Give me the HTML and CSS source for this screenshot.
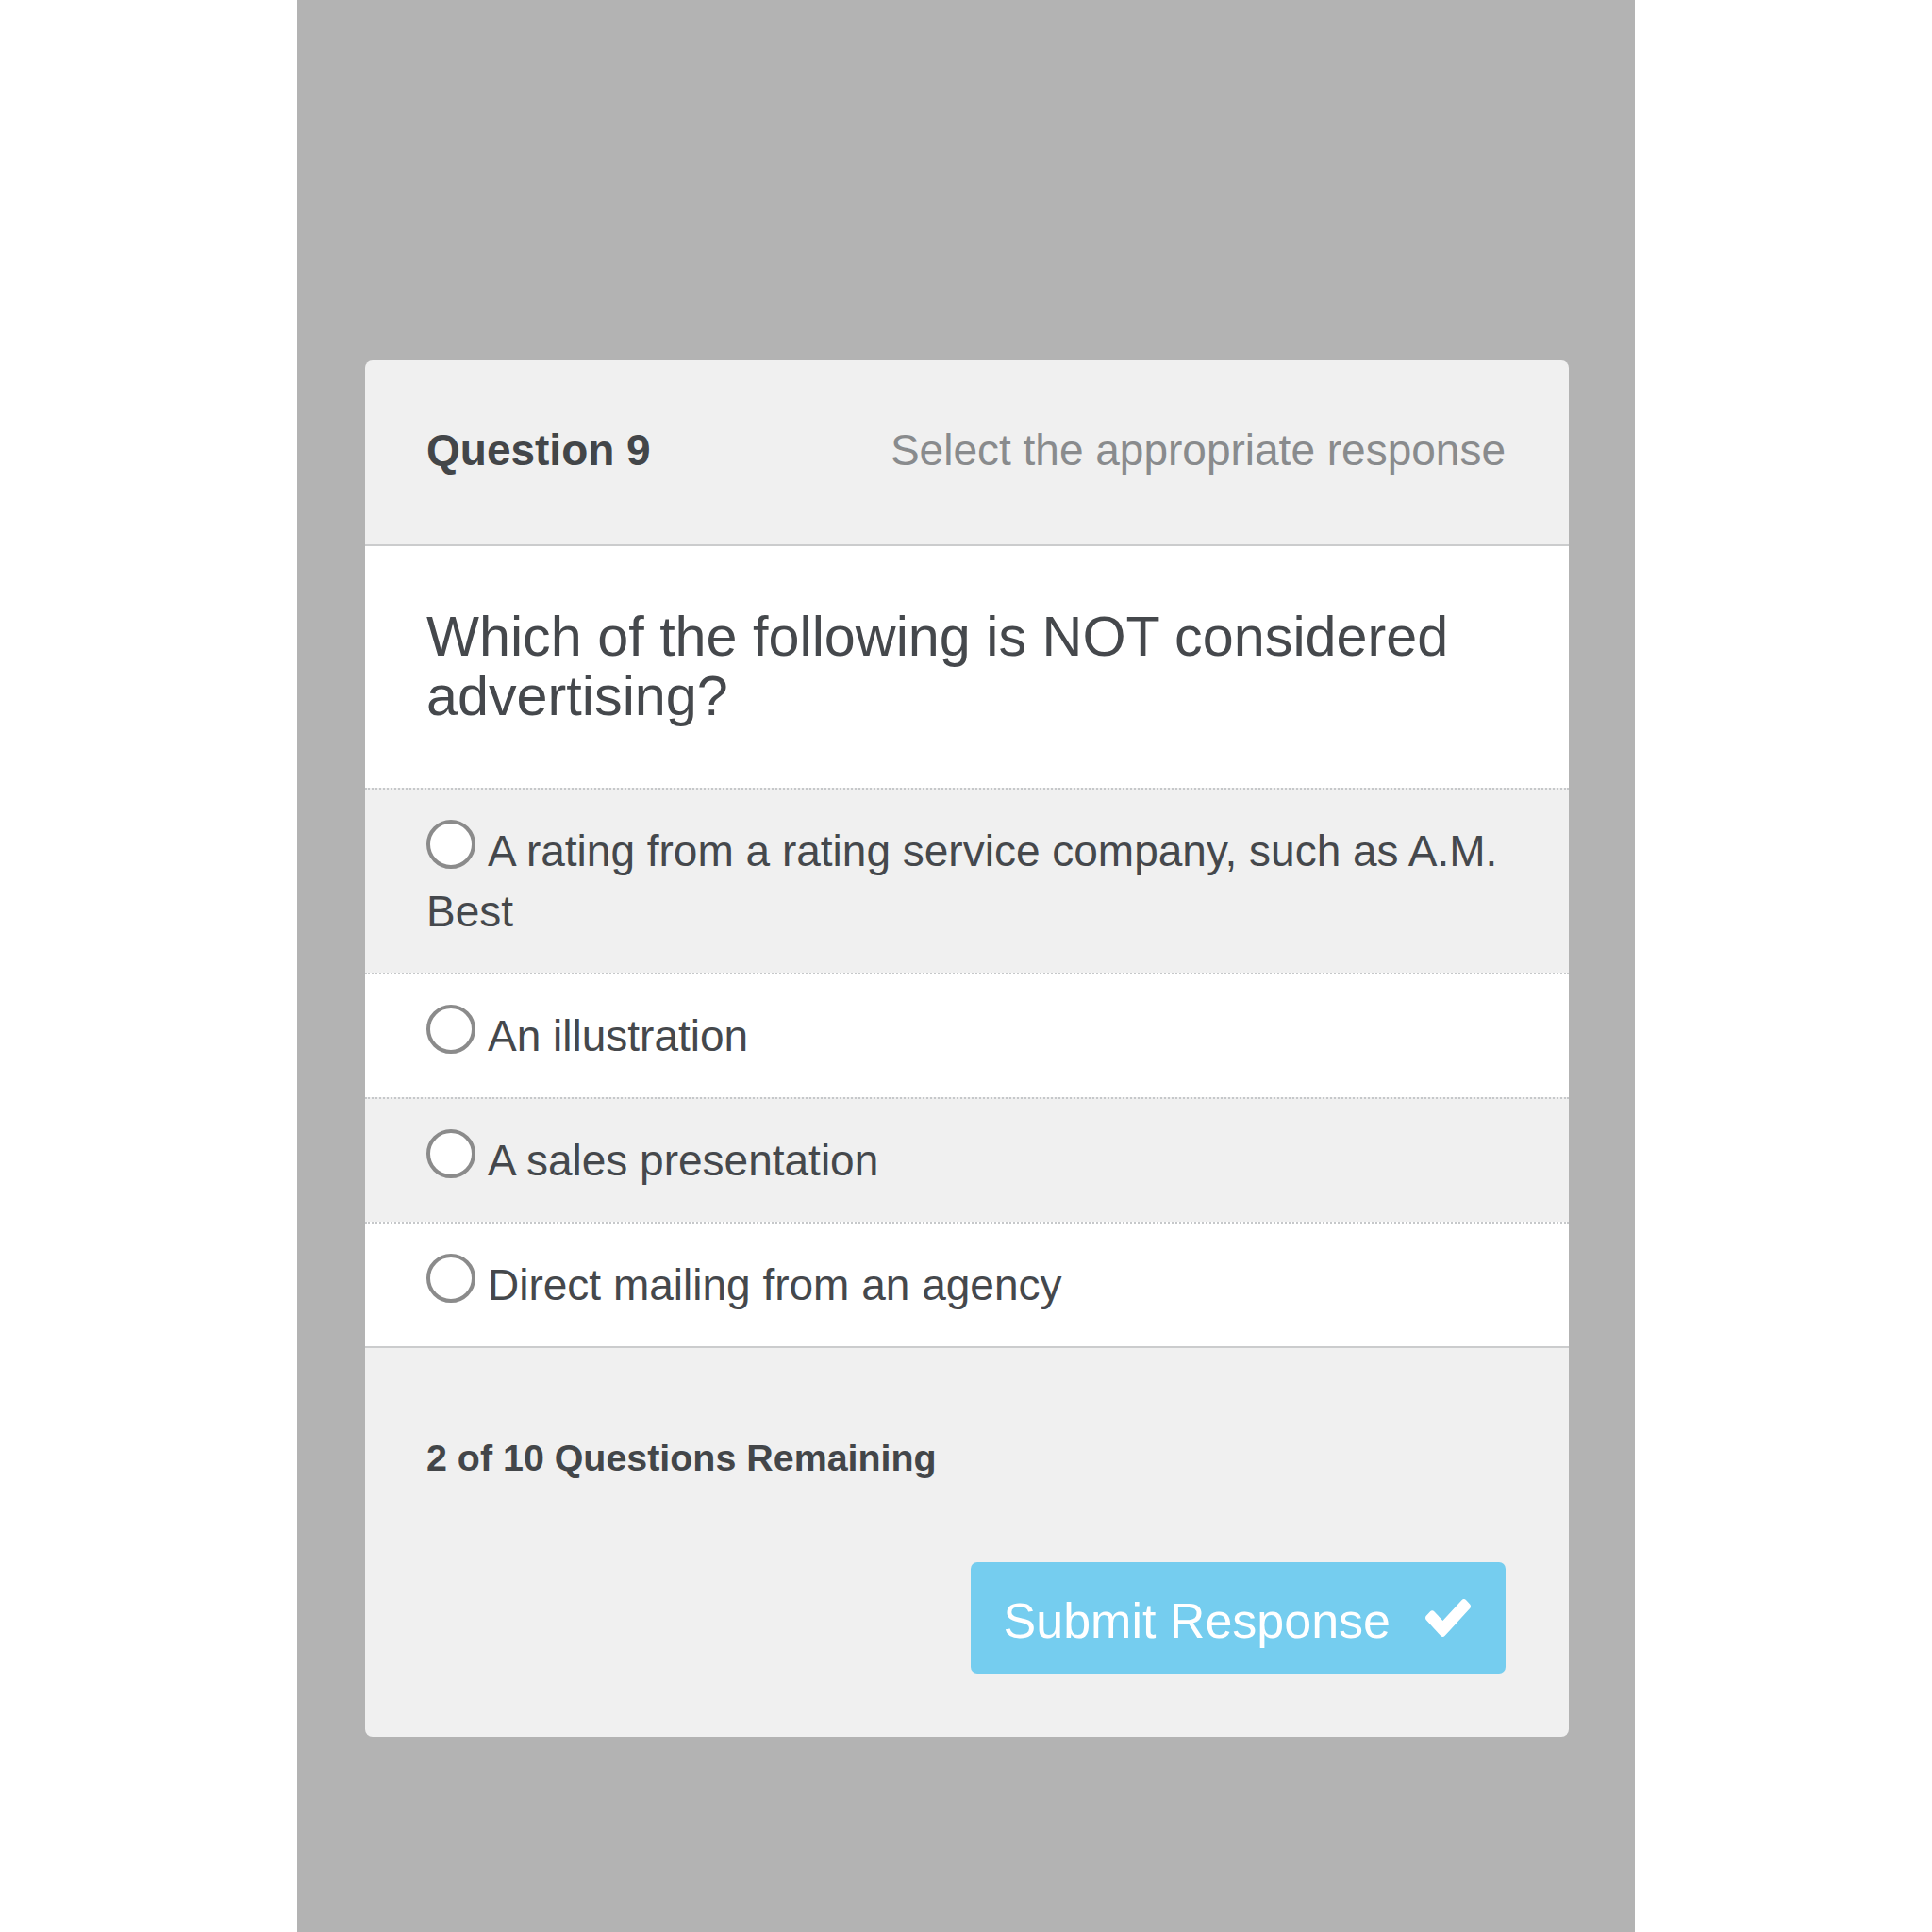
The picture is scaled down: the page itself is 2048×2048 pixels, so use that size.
FILE: index.html
```html
<!DOCTYPE html>
<html lang="en">
<head>
<meta charset="utf-8">
<title>Question 9</title>
<link rel="stylesheet" href="styles.css">
</head>
<body>
<div class="screen">
  <div class="card">
    <div class="card-header">
      <div class="q-number">Question 9</div>
      <div class="q-hint">Select the appropriate response</div>
    </div>
    <div class="q-text">Which of the following is NOT considered advertising?</div>
    <div class="options">
      <div class="option alt"><span class="radio"></span>A rating from a rating service company, such as A.M. Best</div>
      <div class="option"><span class="radio"></span>An illustration</div>
      <div class="option alt"><span class="radio"></span>A sales presentation</div>
      <div class="option"><span class="radio"></span>Direct mailing from an agency</div>
    </div>
    <div class="card-footer">
      <div class="remaining">2 of 10 Questions Remaining</div>
      <div class="actions">
        <button class="submit" type="button">
          <span class="submit-label">Submit Response</span>
          <svg class="check" width="48" height="40" viewBox="121 334 1550 1188" preserveAspectRatio="none" aria-hidden="true"><path fill="#ffffff" d="M1671 566q0 40-28 68l-724 724-136 136q-28 28-68 28t-68-28l-136-136-362-362q-28-28-28-68t28-68l136-136q28-28 68-28t68 28l294 295 656-657q28-28 68-28t68 28l136 136q28 28 28 68z"/></svg>
        </button>
      </div>
    </div>
  </div>
</div>
</body>
</html>
```
FILE: styles.css
```css
html, body {
  margin: 0;
  padding: 0;
  background: #ffffff;
}

body {
  font-family: "Liberation Sans", Arial, Helvetica, sans-serif;
  color: #45484c;
}

.screen {
  box-sizing: border-box;
  margin-left: 315px;
  width: 1418px;
  height: 2048px;
  background: #b3b3b3;
  padding: 382px 70px 0 72px;
}

.card {
  background: #f0f0f0;
  border-radius: 8px;
  overflow: hidden;
}

.card-header {
  box-sizing: border-box;
  height: 197px;
  border-bottom: 2px solid #cbcccd;
  padding: 0 67px 5px 65px;
  display: flex;
  justify-content: space-between;
  align-items: center;
  font-size: 46px;
}

.q-number {
  font-weight: bold;
  color: #434649;
}

.q-hint {
  color: #898b8d;
}

.q-text {
  background: #ffffff;
  padding: 64px 60px 66px 65px;
  font-size: 59.3px;
  line-height: 63px;
}

.option {
  background: #ffffff;
  border-top: 2px dotted #c6c8ca;
  padding: 33px 62px 33px 65px;
  font-size: 46px;
  line-height: 64px;
}

.option.alt {
  background: #f0f0f0;
}

.radio {
  display: inline-block;
  box-sizing: border-box;
  width: 52px;
  height: 52px;
  border: 4px solid #8b8b8b;
  border-radius: 50%;
  background: #ffffff;
  vertical-align: -3px;
  margin: -8px 13px 0 0;
}

.card-footer {
  border-top: 2px solid #cbcccd;
  padding: 92px 67px 67px 65px;
}

.remaining {
  font-size: 39.4px;
  line-height: 48px;
  font-weight: bold;
  color: #434649;
}

.actions {
  display: flex;
  justify-content: flex-end;
  margin-top: 87px;
}

.submit {
  box-sizing: border-box;
  height: 118px;
  border: none;
  border-radius: 7px;
  background: #75cdef;
  color: #ffffff;
  font-family: "Liberation Sans", Arial, Helvetica, sans-serif;
  font-size: 52px;
  padding: 6px 37px 0 35px;
  display: flex;
  align-items: center;
  gap: 37px;
}

.check {
  display: block;
  margin-top: -6px;
}
```
